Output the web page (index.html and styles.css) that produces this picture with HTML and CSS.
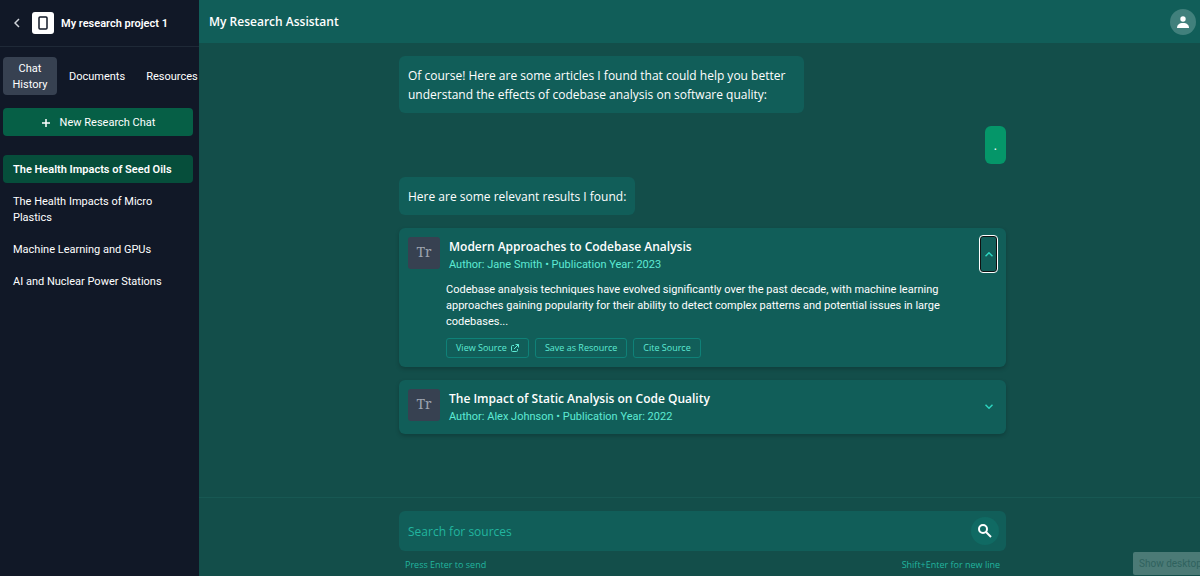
FILE: index.html
```html
<!DOCTYPE html>
<html lang="en">
<head>
    <meta charset="UTF-8">
    <meta name="viewport" content="width=device-width, initial-scale=1.0">
    <title>My Research Assistant</title>
    <link rel="stylesheet" href="styles.css">
</head>
<body>
    <aside class="sidebar">
        <div class="project">
            <button class="back-btn" aria-label="Back">
                <svg width="6" height="10" viewBox="0 0 6 10"><path d="M5 1L1 5l4 4"/></svg>
            </button>
            <span class="project-icon">
                <svg width="12" height="14" viewBox="0 0 12 14"><rect x="2" y="1" width="8" height="12" rx="1"/></svg>
            </span>
            <h2>My research project 1</h2>
        </div>

        <nav class="tabs">
            <button class="tab active">Chat History</button>
            <button class="tab">Documents</button>
            <button class="tab">Resources</button>
        </nav>

        <button class="new-chat">
            <svg width="10" height="10" viewBox="0 0 10 10"><path d="M5 1v8M1 5h8"/></svg>
            New Research Chat
        </button>

        <ul class="chat-list">
            <li><a href="#seed-oils" class="active">The Health Impacts of Seed Oils</a></li>
            <li><a href="#micro-plastics">The Health Impacts of Micro Plastics</a></li>
            <li><a href="#gpus">Machine Learning and GPUs</a></li>
            <li><a href="#nuclear">AI and Nuclear Power Stations</a></li>
        </ul>
    </aside>

    <main class="main">
        <header class="main-header">
            <h1>My Research Assistant</h1>
            <button class="avatar" aria-label="Account">
                <svg width="12" height="12" viewBox="0 0 12 12"><circle cx="6" cy="3" r="2.7"/><path d="M0 12c0-3 2-5 6-5s6 2 6 5z"/></svg>
            </button>
        </header>

        <section class="chat">
            <div class="column messages">
                <div class="message">Of course! Here are some articles I found that could help you better understand the effects of codebase analysis on software quality:</div>
                <div class="message user">.</div>
                <div class="message">Here are some relevant results I found:</div>

                <article class="card">
                    <div class="card-header">
                        <span class="thumb">Tr</span>
                        <div class="card-title">
                            <h3>Modern Approaches to Codebase Analysis</h3>
                            <p>Author: Jane Smith • Publication Year: 2023</p>
                        </div>
                        <button class="toggle focused" aria-label="Collapse" aria-expanded="true">
                            <svg width="8" height="5" viewBox="0 0 8 5"><path d="M.5 4.2L4 .8l3.5 3.4"/></svg>
                        </button>
                    </div>
                    <div class="card-body">
                        <p>Codebase analysis techniques have evolved significantly over the past decade, with machine learning approaches gaining popularity for their ability to detect complex patterns and potential issues in large codebases...</p>
                        <div class="btn-group">
                            <button>
                                View Source
                                <svg width="8" height="8" viewBox="0 0 8 8"><path d="M3 1.5H1.5Q.5 1.5.5 2.5v4q0 1 1 1h4q1 0 1-1V5M4.5.5h3v3M7.5.5L3 5"/></svg>
                            </button>
                            <button>Save as Resource</button>
                            <button>Cite Source</button>
                        </div>
                    </div>
                </article>

                <article class="card">
                    <div class="card-header">
                        <span class="thumb">Tr</span>
                        <div class="card-title">
                            <h3>The Impact of Static Analysis on Code Quality</h3>
                            <p>Author: Alex Johnson • Publication Year: 2022</p>
                        </div>
                        <button class="toggle" aria-label="Expand" aria-expanded="false">
                            <svg width="8" height="5" viewBox="0 0 8 5"><path d="M.5.8L4 4.2 7.5.8"/></svg>
                        </button>
                    </div>
                </article>
            </div>
        </section>

        <footer class="composer">
            <div class="column">
                <form class="search-box">
                    <input type="text" placeholder="Search for sources" aria-label="Search for sources">
                    <button type="button" aria-label="Search">
                        <svg width="14" height="14" viewBox="0 0 14 14"><circle cx="5" cy="5" r="4"/><path d="M8 8l5 5"/></svg>
                    </button>
                </form>
                <div class="hints">
                    <span>Press Enter to send</span>
                    <span>Shift+Enter for new line</span>
                </div>
            </div>
        </footer>
    </main>

    <div class="tooltip">Show desktop</div>
</body>
</html>
```

FILE: styles.css
```css
* {
    box-sizing: border-box;
}

body {
    font-family: "Open Sans", "Noto Sans", sans-serif;
    font-size: 12px;
    line-height: 19px;
    margin: 0;
    height: 100vh;
    display: flex;
    overflow: hidden;
    background-color: #134e4a;
    color: #fff;
}

h1, h2, h3, p, ul {
    margin: 0;
    padding: 0;
}

button {
    font: inherit;
    color: inherit;
    background: none;
    border: none;
    padding: 0;
}

svg {
    fill: none;
    stroke: currentColor;
    flex-shrink: 0;
}

/* sidebar */
.sidebar {
    width: 199px;
    flex-shrink: 0;
    overflow: hidden;
    background-color: #111827;
    font-family: Roboto, sans-serif;
    font-size: 11px;
    line-height: 16px;
}

.project {
    display: flex;
    align-items: center;
    height: 47px;
    padding-left: 14px;
    border-bottom: 1px solid #1f2937;
}

.project h2 {
    font-size: 11px;
    font-weight: 600;
    margin-left: 7px;
    padding-top: 2px;
}

.back-btn {
    display: flex;
    width: 18px;
    color: #d1d5db;
}

.back-btn svg, .new-chat svg {
    stroke-width: 1.5;
}

.project-icon {
    display: flex;
    align-items: center;
    justify-content: center;
    width: 22px;
    height: 22px;
    background-color: #fff;
    color: #111827;
    border-radius: 3px;
}

.project-icon svg {
    stroke-width: 1.5;
}

.tabs {
    display: flex;
    gap: 3px;
    padding: 10px 3px 13px;
}

.tab {
    flex-shrink: 0;
    padding: 4px 9px 2px;
    border-radius: 4px;
}

.tab.active {
    width: 54px;
    background-color: #374151;
}

.new-chat {
    display: flex;
    align-items: center;
    justify-content: center;
    gap: 9px;
    width: 190px;
    height: 28px;
    margin-left: 3px;
    padding-top: 1px;
    background-color: #065f46;
    border-radius: 4px;
}

.chat-list {
    list-style-type: none;
    display: flex;
    flex-direction: column;
    gap: 4px;
    padding: 19px 6px 0 3px;
}

.chat-list a {
    display: block;
    padding: 7px 10px 5px;
    border-radius: 4px;
    color: #fff;
    text-decoration: none;
}

.chat-list a.active {
    background-color: #064e3b;
    font-weight: 600;
}

/* main area */
.main {
    flex: 1;
    min-width: 0;
    display: flex;
    flex-direction: column;
}

.main-header {
    display: flex;
    align-items: center;
    justify-content: space-between;
    height: 43px;
    padding: 0 4px 0 10px;
    background-color: #115e59;
}

.main-header h1 {
    font-size: 12px;
    font-weight: 600;
}

.avatar {
    display: flex;
    align-items: center;
    justify-content: center;
    width: 26px;
    height: 26px;
    border-radius: 50%;
    background-color: #41807c;
}

.avatar svg {
    fill: #fff;
    stroke: none;
}

.chat {
    flex: 1;
    min-height: 0;
    padding: 13px 0 0 6px;
}

.column {
    max-width: 607px;
    margin: 0 auto;
}

.messages {
    display: flex;
    flex-direction: column;
    gap: 13px;
}

.message {
    align-self: flex-start;
    max-width: 405px;
    padding: 10px 9px 9px;
    background-color: #115e59;
    border-radius: 6px;
}

.message.user {
    align-self: flex-end;
    background-color: #059669;
}

.card {
    padding: 9px;
    background-color: #115e59;
    border-radius: 6px;
    box-shadow: 0 2px 4px rgba(0, 0, 0, 0.2);
}

.card-header {
    display: flex;
    align-items: flex-start;
    gap: 9px;
}

.thumb {
    width: 32px;
    height: 32px;
    background-color: #374151;
    color: #9ca3af;
    border-radius: 3px;
    font-family: "Noto Serif", "DejaVu Serif", serif;
    font-size: 14px;
    line-height: 30px;
    text-align: center;
}

.card-title {
    flex: 1;
}

.card-title h3 {
    font-size: 12px;
    font-weight: 600;
    line-height: 20px;
}

.card-title p {
    font-family: Roboto, sans-serif;
    font-size: 11px;
    line-height: 16px;
    color: #5eead4;
}

.toggle {
    display: flex;
    align-items: center;
    justify-content: center;
    width: 15px;
    height: 34px;
    margin-right: 1px;
    border-radius: 2px;
    color: #2dd4bf;
}

.toggle svg {
    stroke-width: 1.5;
}

.toggle.focused {
    outline: 1px solid #fff;
    outline-offset: 1px;
    box-shadow: 0 0 0 1px #101010;
}

.card-body {
    padding: 9px 50px 0 38px;
    font-family: Roboto, sans-serif;
    font-size: 11px;
    line-height: 16px;
}

.btn-group {
    display: flex;
    gap: 6px;
    margin-top: 8px;
}

.btn-group button {
    display: flex;
    align-items: center;
    gap: 4px;
    height: 20px;
    padding: 0 9px;
    border: 1px solid #0f8178;
    border-radius: 3px;
    color: #5eead4;
    font-family: "Open Sans", sans-serif;
    font-size: 9px;
}

/* bottom search bar */
.composer {
    padding: 13px 0 2px 6px;
    border-top: 1px solid #175853;
}

.search-box {
    display: flex;
    align-items: center;
    height: 40px;
    padding: 0 7px 0 9px;
    background-color: #115e59;
    border-radius: 6px;
}

.search-box input {
    flex: 1;
    font: inherit;
    color: #fff;
    background: none;
    border: none;
    outline: none;
    padding: 0;
}

.search-box input::placeholder {
    color: #22b59f;
}

.search-box button {
    display: flex;
    align-items: center;
    justify-content: center;
    width: 28px;
    height: 28px;
    border-radius: 50%;
    background-color: #106a63;
}

.search-box svg {
    stroke-width: 2;
}

.hints {
    display: flex;
    justify-content: space-between;
    padding: 4px 6px 0;
    font-size: 9px;
    color: #22b59f;
}

.tooltip {
    position: fixed;
    right: -8px;
    bottom: 1px;
    width: 75px;
    height: 23px;
    padding: 2px 6px;
    background-color: #4b7a76;
    color: #2f625e;
    border-radius: 2px;
    font-family: Roboto, sans-serif;
    font-size: 10px;
    white-space: nowrap;
}
```
